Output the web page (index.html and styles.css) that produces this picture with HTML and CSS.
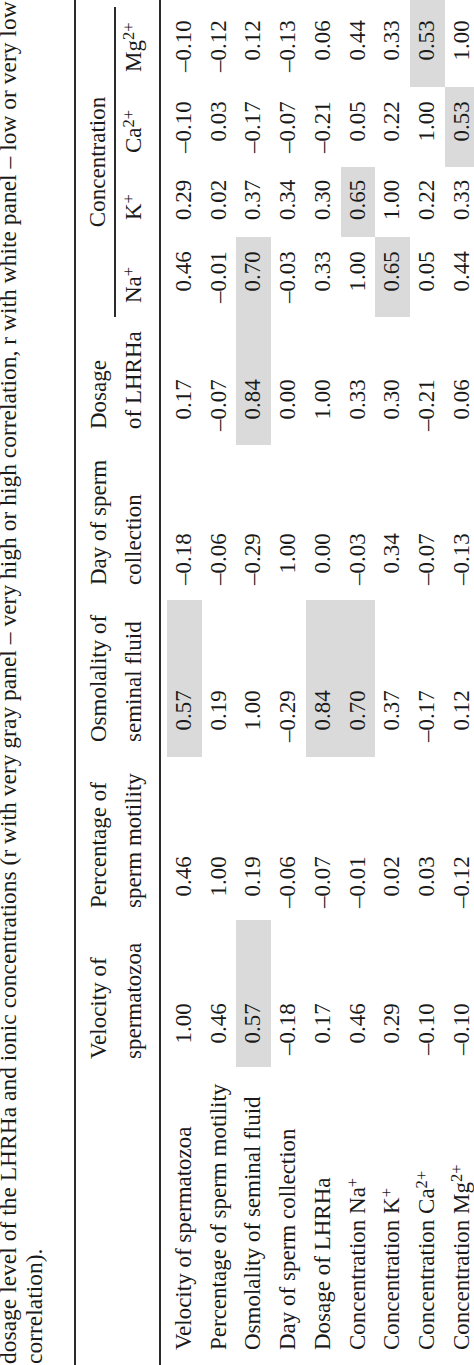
FILE: index.html
```html
<!DOCTYPE html>
<html lang="en">
<head>
<meta charset="utf-8">
<title>Correlation table</title>
<link rel="stylesheet" href="styles.css">
</head>
<body>
<div class="sheet">
  <div class="caption">
    <div class="cap-line">dosage level of the LHRHa and ionic concentrations (r with very gray panel – very high or high correlation, r with white panel – low or very low</div>
    <div class="cap-line">correlation).</div>
  </div>
  <table class="corr">
    <colgroup>
      <col class="w-label"><col class="w-vel"><col class="w-perc"><col class="w-osm"><col class="w-day"><col class="w-dos"><col class="w-na"><col class="w-k"><col class="w-ca"><col class="w-mg">
    </colgroup>
    <thead>
      <tr>
        <th rowspan="2" class="hb h-label"></th>
        <th rowspan="2" class="hb h-vel">Velocity of<br>spermatozoa</th>
        <th rowspan="2" class="hb h-perc">Percentage of<br>sperm motility</th>
        <th rowspan="2" class="hb h-osm">Osmolality of<br>seminal fluid</th>
        <th rowspan="2" class="hb h-day">Day of sperm<br>collection</th>
        <th rowspan="2" class="hb h-dos">Dosage<br>of LHRHa</th>
        <th colspan="4" class="group"><div class="group-label">Concentration</div></th>
      </tr>
      <tr>
        <th class="hb sub h-na">Na<sup>+</sup></th>
        <th class="hb sub h-k">K<sup>+</sup></th>
        <th class="hb sub h-ca">Ca<sup>2+</sup></th>
        <th class="hb sub h-mg">Mg<sup>2+</sup></th>
      </tr>
    </thead>
    <tbody>
      <tr>
        <td>Velocity of spermatozoa</td>
        <td><span class="n">1.00</span></td><td><span class="n">0.46</span></td><td class="hl"><span class="n">0.57</span></td><td><span class="n">–0.18</span></td><td><span class="n">0.17</span></td><td><span class="n">0.46</span></td><td><span class="n">0.29</span></td><td><span class="n">–0.10</span></td><td><span class="n">–0.10</span></td>
      </tr>
      <tr>
        <td>Percentage of sperm motility</td>
        <td><span class="n">0.46</span></td><td><span class="n">1.00</span></td><td><span class="n">0.19</span></td><td><span class="n">–0.06</span></td><td><span class="n">–0.07</span></td><td><span class="n">–0.01</span></td><td><span class="n">0.02</span></td><td><span class="n">0.03</span></td><td><span class="n">–0.12</span></td>
      </tr>
      <tr>
        <td>Osmolality of seminal fluid</td>
        <td class="hl"><span class="n">0.57</span></td><td><span class="n">0.19</span></td><td><span class="n">1.00</span></td><td><span class="n">–0.29</span></td><td class="hl"><span class="n">0.84</span></td><td class="hl"><span class="n">0.70</span></td><td><span class="n">0.37</span></td><td><span class="n">–0.17</span></td><td><span class="n">0.12</span></td>
      </tr>
      <tr>
        <td>Day of sperm collection</td>
        <td><span class="n">–0.18</span></td><td><span class="n">–0.06</span></td><td><span class="n">–0.29</span></td><td><span class="n">1.00</span></td><td><span class="n">0.00</span></td><td><span class="n">–0.03</span></td><td><span class="n">0.34</span></td><td><span class="n">–0.07</span></td><td><span class="n">–0.13</span></td>
      </tr>
      <tr>
        <td>Dosage of LHRHa</td>
        <td><span class="n">0.17</span></td><td><span class="n">–0.07</span></td><td class="hl"><span class="n">0.84</span></td><td><span class="n">0.00</span></td><td><span class="n">1.00</span></td><td><span class="n">0.33</span></td><td><span class="n">0.30</span></td><td><span class="n">–0.21</span></td><td><span class="n">0.06</span></td>
      </tr>
      <tr>
        <td>Concentration Na<sup>+</sup></td>
        <td><span class="n">0.46</span></td><td><span class="n">–0.01</span></td><td class="hl"><span class="n">0.70</span></td><td><span class="n">–0.03</span></td><td><span class="n">0.33</span></td><td><span class="n">1.00</span></td><td class="hl"><span class="n">0.65</span></td><td><span class="n">0.05</span></td><td><span class="n">0.44</span></td>
      </tr>
      <tr>
        <td>Concentration K<sup>+</sup></td>
        <td><span class="n">0.29</span></td><td><span class="n">0.02</span></td><td><span class="n">0.37</span></td><td><span class="n">0.34</span></td><td><span class="n">0.30</span></td><td class="hl"><span class="n">0.65</span></td><td><span class="n">1.00</span></td><td><span class="n">0.22</span></td><td><span class="n">0.33</span></td>
      </tr>
      <tr>
        <td>Concentration Ca<sup>2+</sup></td>
        <td><span class="n">–0.10</span></td><td><span class="n">0.03</span></td><td><span class="n">–0.17</span></td><td><span class="n">–0.07</span></td><td><span class="n">–0.21</span></td><td><span class="n">0.05</span></td><td><span class="n">0.22</span></td><td><span class="n">1.00</span></td><td class="hl"><span class="n">0.53</span></td>
      </tr>
      <tr>
        <td>Concentration Mg<sup>2+</sup></td>
        <td><span class="n">–0.10</span></td><td><span class="n">–0.12</span></td><td><span class="n">0.12</span></td><td><span class="n">–0.13</span></td><td><span class="n">0.06</span></td><td><span class="n">0.44</span></td><td><span class="n">0.33</span></td><td class="hl"><span class="n">0.53</span></td><td><span class="n">1.00</span></td>
      </tr>
    </tbody>
  </table>
</div>
</body>
</html>
```

FILE: styles.css
```css
html, body {
  margin: 0;
  padding: 0;
  width: 474px;
  height: 1365px;
  overflow: hidden;
  background: #ffffff;
}

.sheet {
  width: 1365px;
  height: 474px;
  overflow: hidden;
  background: #ffffff;
  color: #1a1a1a;
  font-family: "Liberation Serif", "Times New Roman", serif;
  transform-origin: 0 0;
  transform: translateY(1365px) rotate(-90deg);
}

.caption {
  margin-top: -5px;
  font-size: 23.5px;
  line-height: 26px;
  padding-left: 1px;
}

.cap-line {
  white-space: nowrap;
}

.corr {
  margin-top: 27px;
  width: 1365px;
  table-layout: fixed;
  border-collapse: separate;
  border-spacing: 0;
  border-top: 2px solid #2b2b2b;
  font-size: 23px;
}

.w-label { width: 298px; }
.w-vel { width: 147px; }
.w-perc { width: 163px; }
.w-osm { width: 157px; }
.w-day { width: 155px; }
.w-dos { width: 128px; }
.w-na { width: 80px; }
.w-k { width: 70px; }
.w-ca { width: 80px; }
.w-mg { width: 87px; }

.corr th {
  font-weight: normal;
  text-align: left;
  vertical-align: top;
  white-space: nowrap;
  line-height: 35px;
  padding: 5px 0 8px 14px;
}

.corr th.hb {
  border-bottom: 2px solid #2b2b2b;
}

.corr th.sub {
  padding-top: 0;
}

.corr th.group {
  padding: 5px 0 0 0;
}

.group-label {
  line-height: 33px;
  text-align: center;
  border-bottom: 2px solid #2b2b2b;
  margin-right: 7px;
}

.h-label { padding-left: 15px; }
.corr th.h-vel { padding-left: 8px; }
.corr th.h-perc { padding-left: 12px; }
.corr th.h-osm { padding-left: 15px; }
.corr th.h-day { padding-left: 15px; }
.corr th.h-dos { padding-left: 16px; }
.corr th.h-na { padding-left: 14px; }
.corr th.h-k { padding-left: 17px; }
.corr th.h-ca { padding-left: 14px; }
.corr th.h-mg { padding-left: 15px; }

.corr td {
  line-height: 34.7px;
  padding: 0 0 0 14px;
  white-space: nowrap;
  vertical-align: top;
  background-clip: padding-box;
}

.corr tbody tr:first-child td {
  border-top: 6px solid transparent;
}

.corr td:nth-child(1) { padding-left: 15px; }
.corr td:nth-child(2) { padding-left: 12px; }
.corr td:nth-child(3) { padding-left: 12px; }
.corr td:nth-child(4) { padding-left: 15px; }
.corr td:nth-child(5) { padding-left: 15px; }
.corr td:nth-child(6) { padding-left: 14px; }
.corr td:nth-child(7) { padding-left: 14px; }
.corr td:nth-child(8) { padding-left: 17px; }
.corr td:nth-child(9) { padding-left: 14px; }
.corr td:nth-child(10) { padding-left: 15px; }

.corr td.hl {
  background-color: #dadada;
}

.n {
  display: inline-block;
  width: 2.25em;
  text-align: right;
}

.corr td:nth-child(8) .n {
  width: auto;
}

sup {
  font-size: 0.72em;
  line-height: 0;
  vertical-align: 0.4em;
}
```
